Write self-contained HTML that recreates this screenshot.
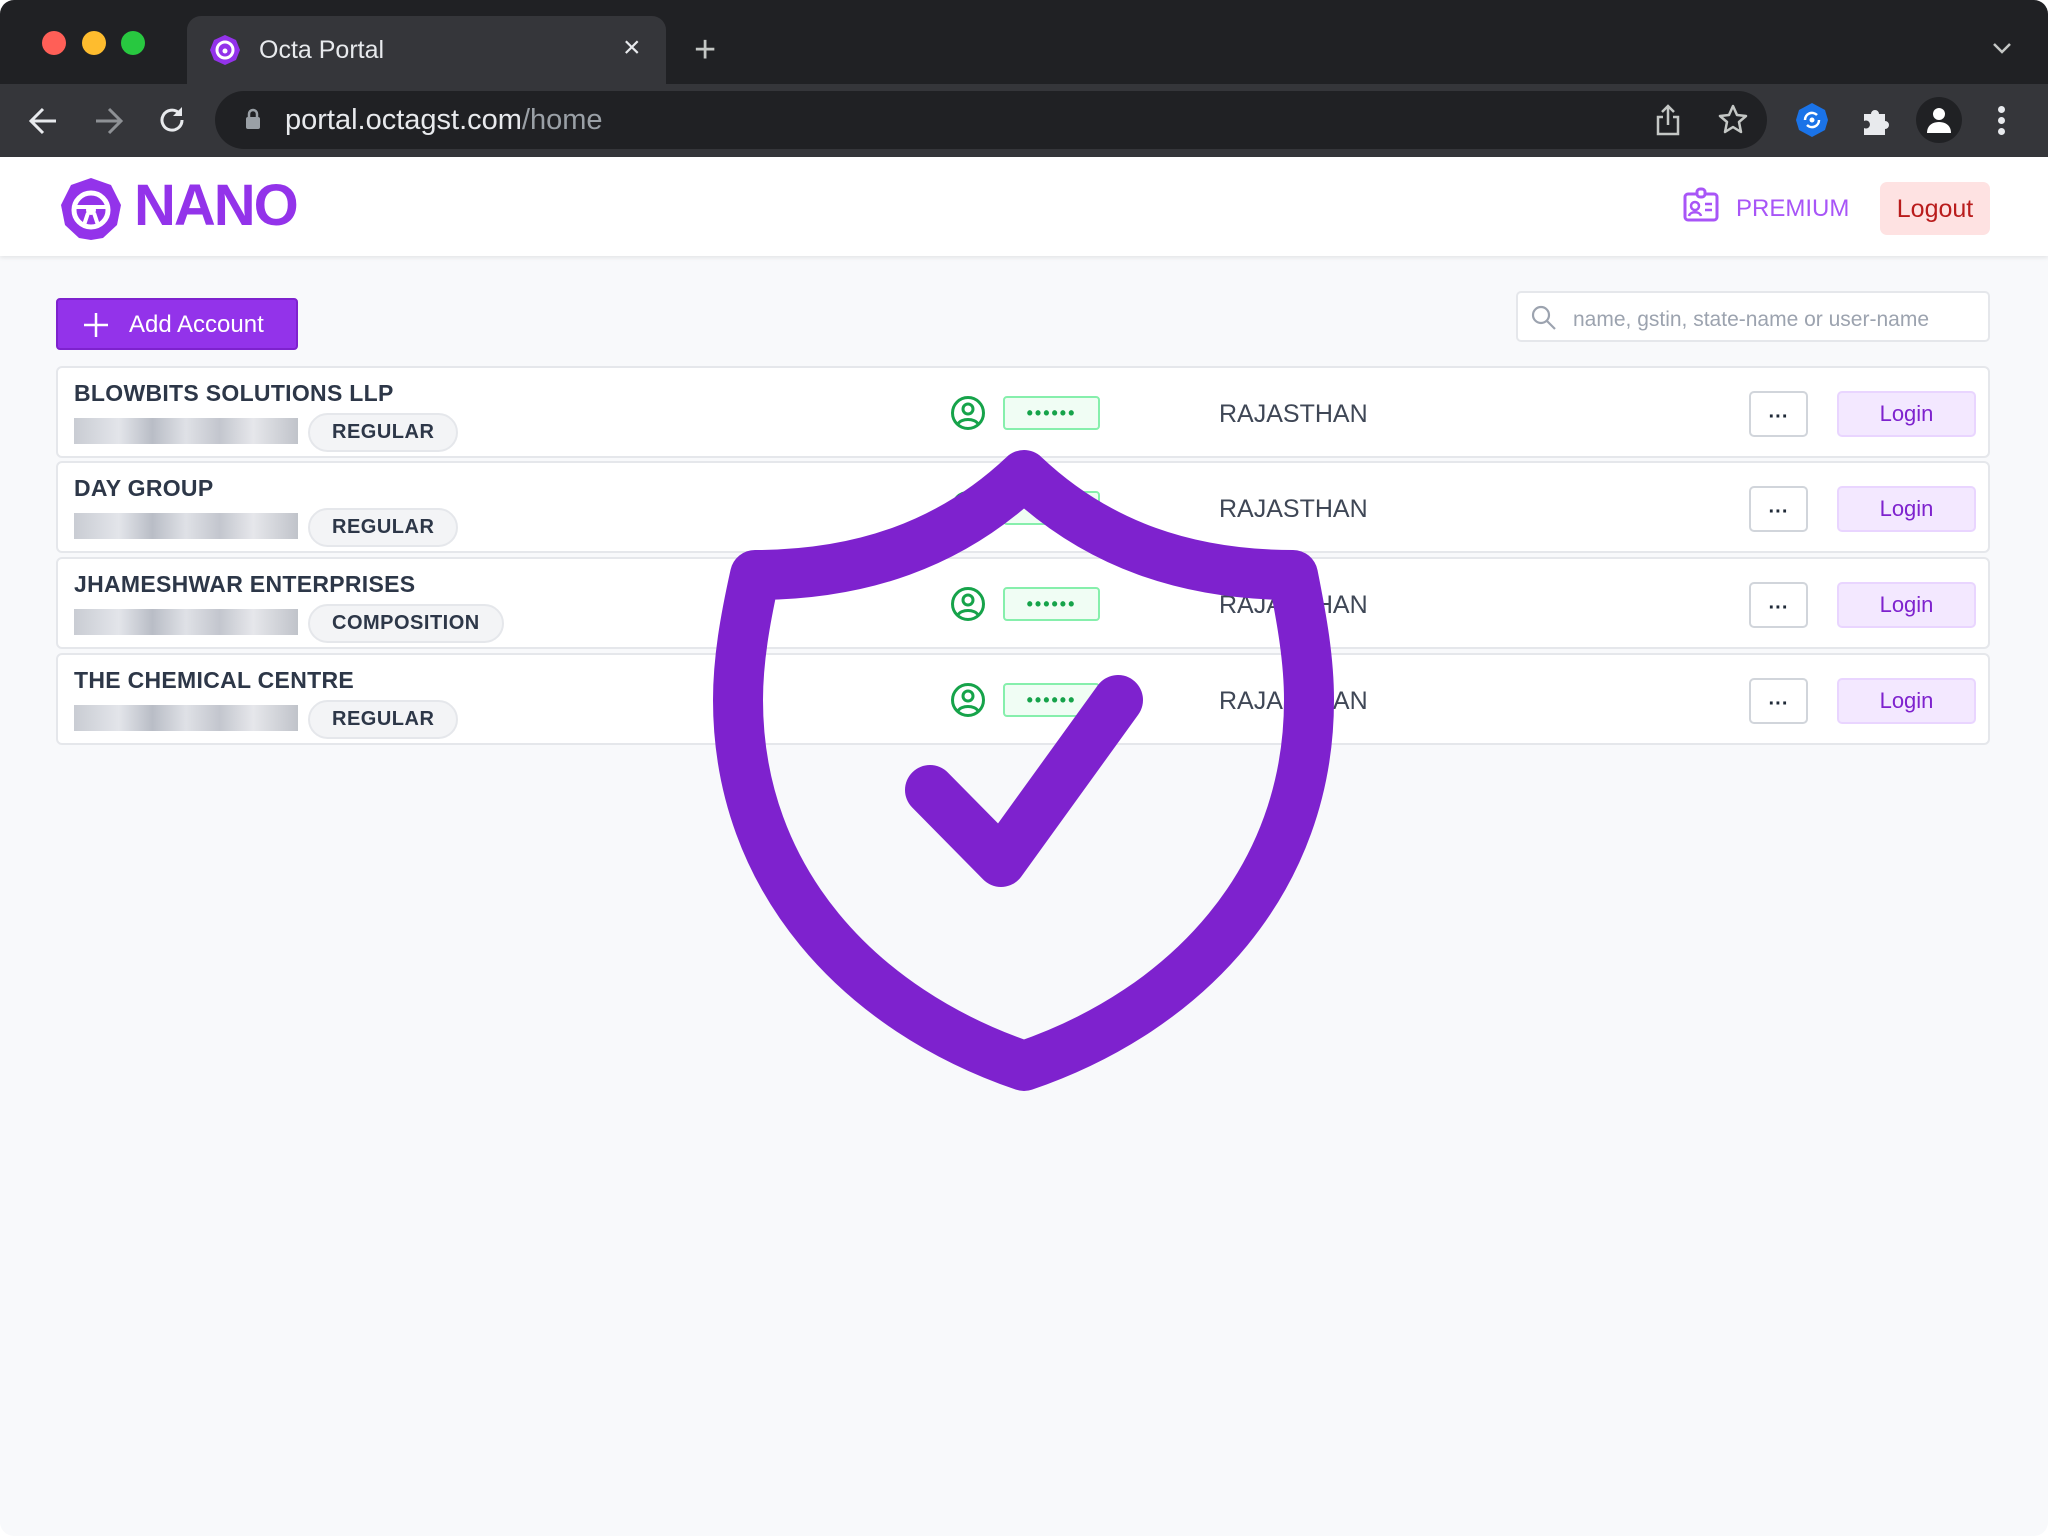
<!DOCTYPE html>
<html><head><meta charset="utf-8"><style>
*{box-sizing:border-box;margin:0;padding:0}
body{width:2048px;height:1536px;background:#fff;font-family:"Liberation Sans",sans-serif;position:relative;overflow:hidden}
.win{position:absolute;left:0;top:0;width:2048px;height:1536px;border-radius:14px;overflow:hidden;background:#f8f9fb}
.tabs{position:absolute;left:0;top:0;width:2048px;height:84px;background:#202124}
.tab{position:absolute;left:187px;top:16px;width:479px;height:68px;background:#35363a;border-radius:14px 14px 0 0}
.tool{position:absolute;left:0;top:84px;width:2048px;height:73px;background:#35363a}
.url{position:absolute;left:215px;top:91px;width:1552px;height:58px;background:#202124;border-radius:29px}
.hdr{position:absolute;left:0;top:157px;width:2048px;height:99px;background:#fff;box-shadow:0 2px 4px rgba(0,0,0,.08)}
.abs{position:absolute}
.row{position:absolute;left:56px;width:1934px;height:92px;background:#fff;border:2px solid #e5e7eb;border-radius:6px}
.name{position:absolute;left:16px;top:12px;font-size:23px;font-weight:bold;color:#2d3748;letter-spacing:.3px}
.blur{position:absolute;left:16px;top:50px;width:224px;height:26px;background:linear-gradient(90deg,#c9ccd3,#e3e5ea 20%,#b9bdc6 35%,#dfe1e6 50%,#c3c6ce 65%,#e6e7eb 80%,#c0c3ca)}
.badge{position:absolute;left:250px;top:45px;height:39px;padding:0 22px;border:2px solid #e5e7eb;background:#f3f4f6;border-radius:20px;font-size:20px;font-weight:bold;color:#2d3748;line-height:35px;letter-spacing:.5px}
.ui{position:absolute;left:892px;top:27px}
.pw{position:absolute;left:945px;top:28px;width:97px;height:34px;border:2px solid #86efac;background:#f0fdf4;border-radius:4px;color:#16a34a;font-size:18px;text-align:center;line-height:30px;letter-spacing:2px;font-weight:bold}
.st{position:absolute;left:1161px;top:32px;font-size:25px;color:#3f4756}
.dots{position:absolute;left:1691px;top:23px;width:59px;height:46px;border:2px solid #d1d5db;border-radius:5px;text-align:center;font-size:20px;line-height:48px;color:#1f2937;font-weight:bold}
.login{position:absolute;left:1779px;top:23px;width:139px;height:46px;border:2px solid #e9d5ff;background:#f3e8ff;border-radius:5px;text-align:center;font-size:22px;line-height:42px;color:#7e22ce}
</style></head><body><div class="win">
<div class="tabs">
<div class="abs" style="left:42px;top:31px;width:24px;height:24px;border-radius:50%;background:#ff5f57"></div>
<div class="abs" style="left:82px;top:31px;width:24px;height:24px;border-radius:50%;background:#febc2e"></div>
<div class="abs" style="left:121px;top:31px;width:24px;height:24px;border-radius:50%;background:#28c840"></div>
<div class="tab">
<svg class="abs" style="left:22px;top:18px" width="32" height="32" viewBox="0 0 32 32"><polygon points="16,1 27,6 31,16 27,26 16,31 5,26 1,16 5,6" fill="#9333ea"/><circle cx="16" cy="16" r="8" fill="none" stroke="#fff" stroke-width="3"/><circle cx="16" cy="17" r="2.5" fill="#fff"/></svg>
<div class="abs" style="left:72px;top:20px;font-size:25px;color:#e8eaed">Octa Portal</div>
<div class="abs" style="left:436px;top:15px;font-size:30px;color:#e8eaed">×</div>
</div>
<div class="abs" style="left:694px;top:31px;font-size:38px;color:#c4c7c5;line-height:1">+</div>
<svg class="abs" style="left:1992px;top:42px" width="20" height="14" viewBox="0 0 20 14"><path d="M2 2l8 8 8-8" fill="none" stroke="#c4c7c5" stroke-width="2.5"/></svg>
</div>
<div class="tool">
<svg class="abs" style="left:28px;top:22px" width="32" height="30" viewBox="0 0 32 30"><path d="M28 15H4M15 3L3 15l12 12" fill="none" stroke="#e8eaed" stroke-width="3"/></svg>
<svg class="abs" style="left:92px;top:22px" width="32" height="30" viewBox="0 0 32 30"><path d="M4 15h24M17 3l12 12-12 12" fill="none" stroke="#8e9195" stroke-width="3"/></svg>
<svg class="abs" style="left:156px;top:20px" width="32" height="32" viewBox="0 0 32 32"><path d="M26 16a10 10 0 1 1-3-7" fill="none" stroke="#e8eaed" stroke-width="3"/><path d="M26 3v9h-9z" fill="#e8eaed"/></svg>
</div>
<div class="url">
<svg class="abs" style="left:30px;top:17px" width="16" height="22" viewBox="0 0 16 22"><rect x="1" y="9" width="14" height="12" rx="2" fill="#9aa0a6"/><path d="M4 9V6a4 4 0 0 1 8 0v3" fill="none" stroke="#9aa0a6" stroke-width="2.5"/></svg>
<div class="abs" style="left:70px;top:13px;font-size:29px;color:#e8eaed">portal.octagst.com<span style="color:#9aa0a6">/home</span></div>
<svg class="abs" style="left:1440px;top:12px" width="26" height="34" viewBox="0 0 26 34"><path d="M13 22V3M7 9l6-6 6 6M8 14H3v17h20V14h-5" fill="none" stroke="#c4c7c5" stroke-width="2.5"/></svg>
<svg class="abs" style="left:1502px;top:12px" width="32" height="32" viewBox="0 0 32 32"><path d="M16 3l4 9 9 1-7 6 2 10-8-5-8 5 2-10-7-6 9-1z" fill="none" stroke="#c4c7c5" stroke-width="2.5" stroke-linejoin="round"/></svg>
</div>
<svg class="abs" style="left:1795px;top:102px" width="34" height="36" viewBox="0 0 34 36"><polygon points="17,1 30,8 33,18 30,28 17,35 4,28 1,18 4,8" fill="#1a73e8"/><path d="M10 18a7 7 0 0 1 12-5M24 18a7 7 0 0 1-12 5" fill="none" stroke="#fff" stroke-width="2.5"/><circle cx="17" cy="18" r="2.5" fill="#fff"/></svg>
<svg class="abs" style="left:1860px;top:104px" width="32" height="32" viewBox="0 0 32 32"><path d="M4 10h7a4 4 0 1 1 8 0h6v7a4 4 0 1 1 0 8v6H4v-7a4 4 0 1 0 0-7z" fill="#e8eaed"/></svg>
<div class="abs" style="left:1916px;top:97px;width:46px;height:46px;border-radius:50%;background:#202124"></div>
<svg class="abs" style="left:1926px;top:106px" width="26" height="28" viewBox="0 0 26 28"><circle cx="13" cy="8" r="6" fill="#fff"/><path d="M1 27c0-8 6-11 12-11s12 3 12 11z" fill="#fff"/></svg>
<div class="abs" style="left:1998px;top:106px;width:7px;height:7px;border-radius:50%;background:#e8eaed;box-shadow:0 11px 0 #e8eaed,0 22px 0 #e8eaed"></div>
<div class="hdr">
<svg class="abs" style="left:59px;top:20px" width="64" height="64" viewBox="0 0 64 64"><polygon points="32,1 52,8 62,28 58,48 44,61 32,63 20,61 6,48 2,28 12,8" fill="#9333ea"/><circle cx="32" cy="33" r="17" fill="none" stroke="#fff" stroke-width="5"/><path d="M16 30h32" stroke="#fff" stroke-width="4"/><circle cx="32" cy="33" r="5" fill="#fff"/><path d="M29 36l-4 12M35 36l4 12" stroke="#fff" stroke-width="4"/></svg>
<div class="abs" style="left:134px;top:20px;font-size:58px;font-weight:bold;color:#9333ea;letter-spacing:-2px;line-height:1">NANO</div>
<svg class="abs" style="left:1683px;top:30px" width="36" height="36" viewBox="0 0 36 36"><rect x="2" y="7" width="32" height="26" rx="3" fill="none" stroke="#a855f7" stroke-width="3"/><rect x="14" y="2" width="8" height="8" rx="3" fill="#fff" stroke="#a855f7" stroke-width="3"/><circle cx="12" cy="19" r="4" fill="none" stroke="#a855f7" stroke-width="2.5"/><path d="M6 29c1-5 11-5 12 0M22 17h7M22 23h7" stroke="#a855f7" stroke-width="2.5" fill="none"/></svg>
<div class="abs" style="left:1736px;top:38px;font-size:24px;color:#a855f7">PREMIUM</div>
<div class="abs" style="left:1880px;top:25px;width:110px;height:53px;background:#fee2e2;border-radius:7px;text-align:center;line-height:55px;font-size:25px;color:#b91c1c">Logout</div>
</div>
<div class="abs" style="left:56px;top:298px;width:242px;height:52px;background:#9333ea;border:2px solid #7e22ce;border-radius:4px;color:#fff;font-size:24px;line-height:50px;padding-left:71px">Add Account</div>
<svg class="abs" style="left:83px;top:312px" width="26" height="26" viewBox="0 0 26 26"><path d="M13 1v24M1 13h24" stroke="#fff" stroke-width="2.5"/></svg>
<div class="abs" style="left:1516px;top:291px;width:474px;height:51px;background:#fff;border:2px solid #e5e7eb;border-radius:5px"></div>
<svg class="abs" style="left:1531px;top:305px" width="26" height="26" viewBox="0 0 26 26"><circle cx="10" cy="10" r="8" fill="none" stroke="#9ca3af" stroke-width="2.2"/><path d="M16 16l8 8" stroke="#9ca3af" stroke-width="2.2"/></svg>
<div class="abs" style="left:1573px;top:308px;font-size:21px;color:#9ca3af">name, gstin, state-name or user-name</div>

<div class="row" style="top:366px"><div class="name">BLOWBITS SOLUTIONS LLP</div><div class="blur"></div><div class="badge">REGULAR</div>
<svg class="ui" width="36" height="36" viewBox="0 0 36 36"><circle cx="18" cy="18" r="15.5" fill="none" stroke="#16a34a" stroke-width="3"/><circle cx="18" cy="14" r="5" fill="none" stroke="#16a34a" stroke-width="3"/><path d="M8 29c3-6 17-6 20 0" fill="none" stroke="#16a34a" stroke-width="3"/></svg>
<div class="pw">••••••</div><div class="st">RAJASTHAN</div><div class="dots">···</div><div class="login">Login</div></div>
<div class="row" style="top:461px"><div class="name">DAY GROUP</div><div class="blur"></div><div class="badge">REGULAR</div>
<svg class="ui" width="36" height="36" viewBox="0 0 36 36"><circle cx="18" cy="18" r="15.5" fill="none" stroke="#16a34a" stroke-width="3"/><circle cx="18" cy="14" r="5" fill="none" stroke="#16a34a" stroke-width="3"/><path d="M8 29c3-6 17-6 20 0" fill="none" stroke="#16a34a" stroke-width="3"/></svg>
<div class="pw">••••••</div><div class="st">RAJASTHAN</div><div class="dots">···</div><div class="login">Login</div></div>
<div class="row" style="top:557px"><div class="name">JHAMESHWAR ENTERPRISES</div><div class="blur"></div><div class="badge">COMPOSITION</div>
<svg class="ui" width="36" height="36" viewBox="0 0 36 36"><circle cx="18" cy="18" r="15.5" fill="none" stroke="#16a34a" stroke-width="3"/><circle cx="18" cy="14" r="5" fill="none" stroke="#16a34a" stroke-width="3"/><path d="M8 29c3-6 17-6 20 0" fill="none" stroke="#16a34a" stroke-width="3"/></svg>
<div class="pw">••••••</div><div class="st">RAJASTHAN</div><div class="dots">···</div><div class="login">Login</div></div>
<div class="row" style="top:653px"><div class="name">THE CHEMICAL CENTRE</div><div class="blur"></div><div class="badge">REGULAR</div>
<svg class="ui" width="36" height="36" viewBox="0 0 36 36"><circle cx="18" cy="18" r="15.5" fill="none" stroke="#16a34a" stroke-width="3"/><circle cx="18" cy="14" r="5" fill="none" stroke="#16a34a" stroke-width="3"/><path d="M8 29c3-6 17-6 20 0" fill="none" stroke="#16a34a" stroke-width="3"/></svg>
<div class="pw">••••••</div><div class="st">RAJASTHAN</div><div class="dots">···</div><div class="login">Login</div></div>

<svg class="abs" style="left:0;top:0" width="2048" height="1536" viewBox="0 0 2048 1536">
<path d="M1024 475 C950 545 860 575 755 575 C745 620 738 660 738 700 C738 880 860 1010 1024 1066 C1188 1010 1309 880 1309 700 C1309 660 1302 620 1293 575 C1188 575 1098 545 1024 475 Z" fill="none" stroke="#7e22ce" stroke-width="50" stroke-linejoin="round"/>
<path d="M930 790 L1001 862 L1118 700" fill="none" stroke="#7e22ce" stroke-width="50" stroke-linecap="round" stroke-linejoin="round"/>
</svg>
</div></body></html>
